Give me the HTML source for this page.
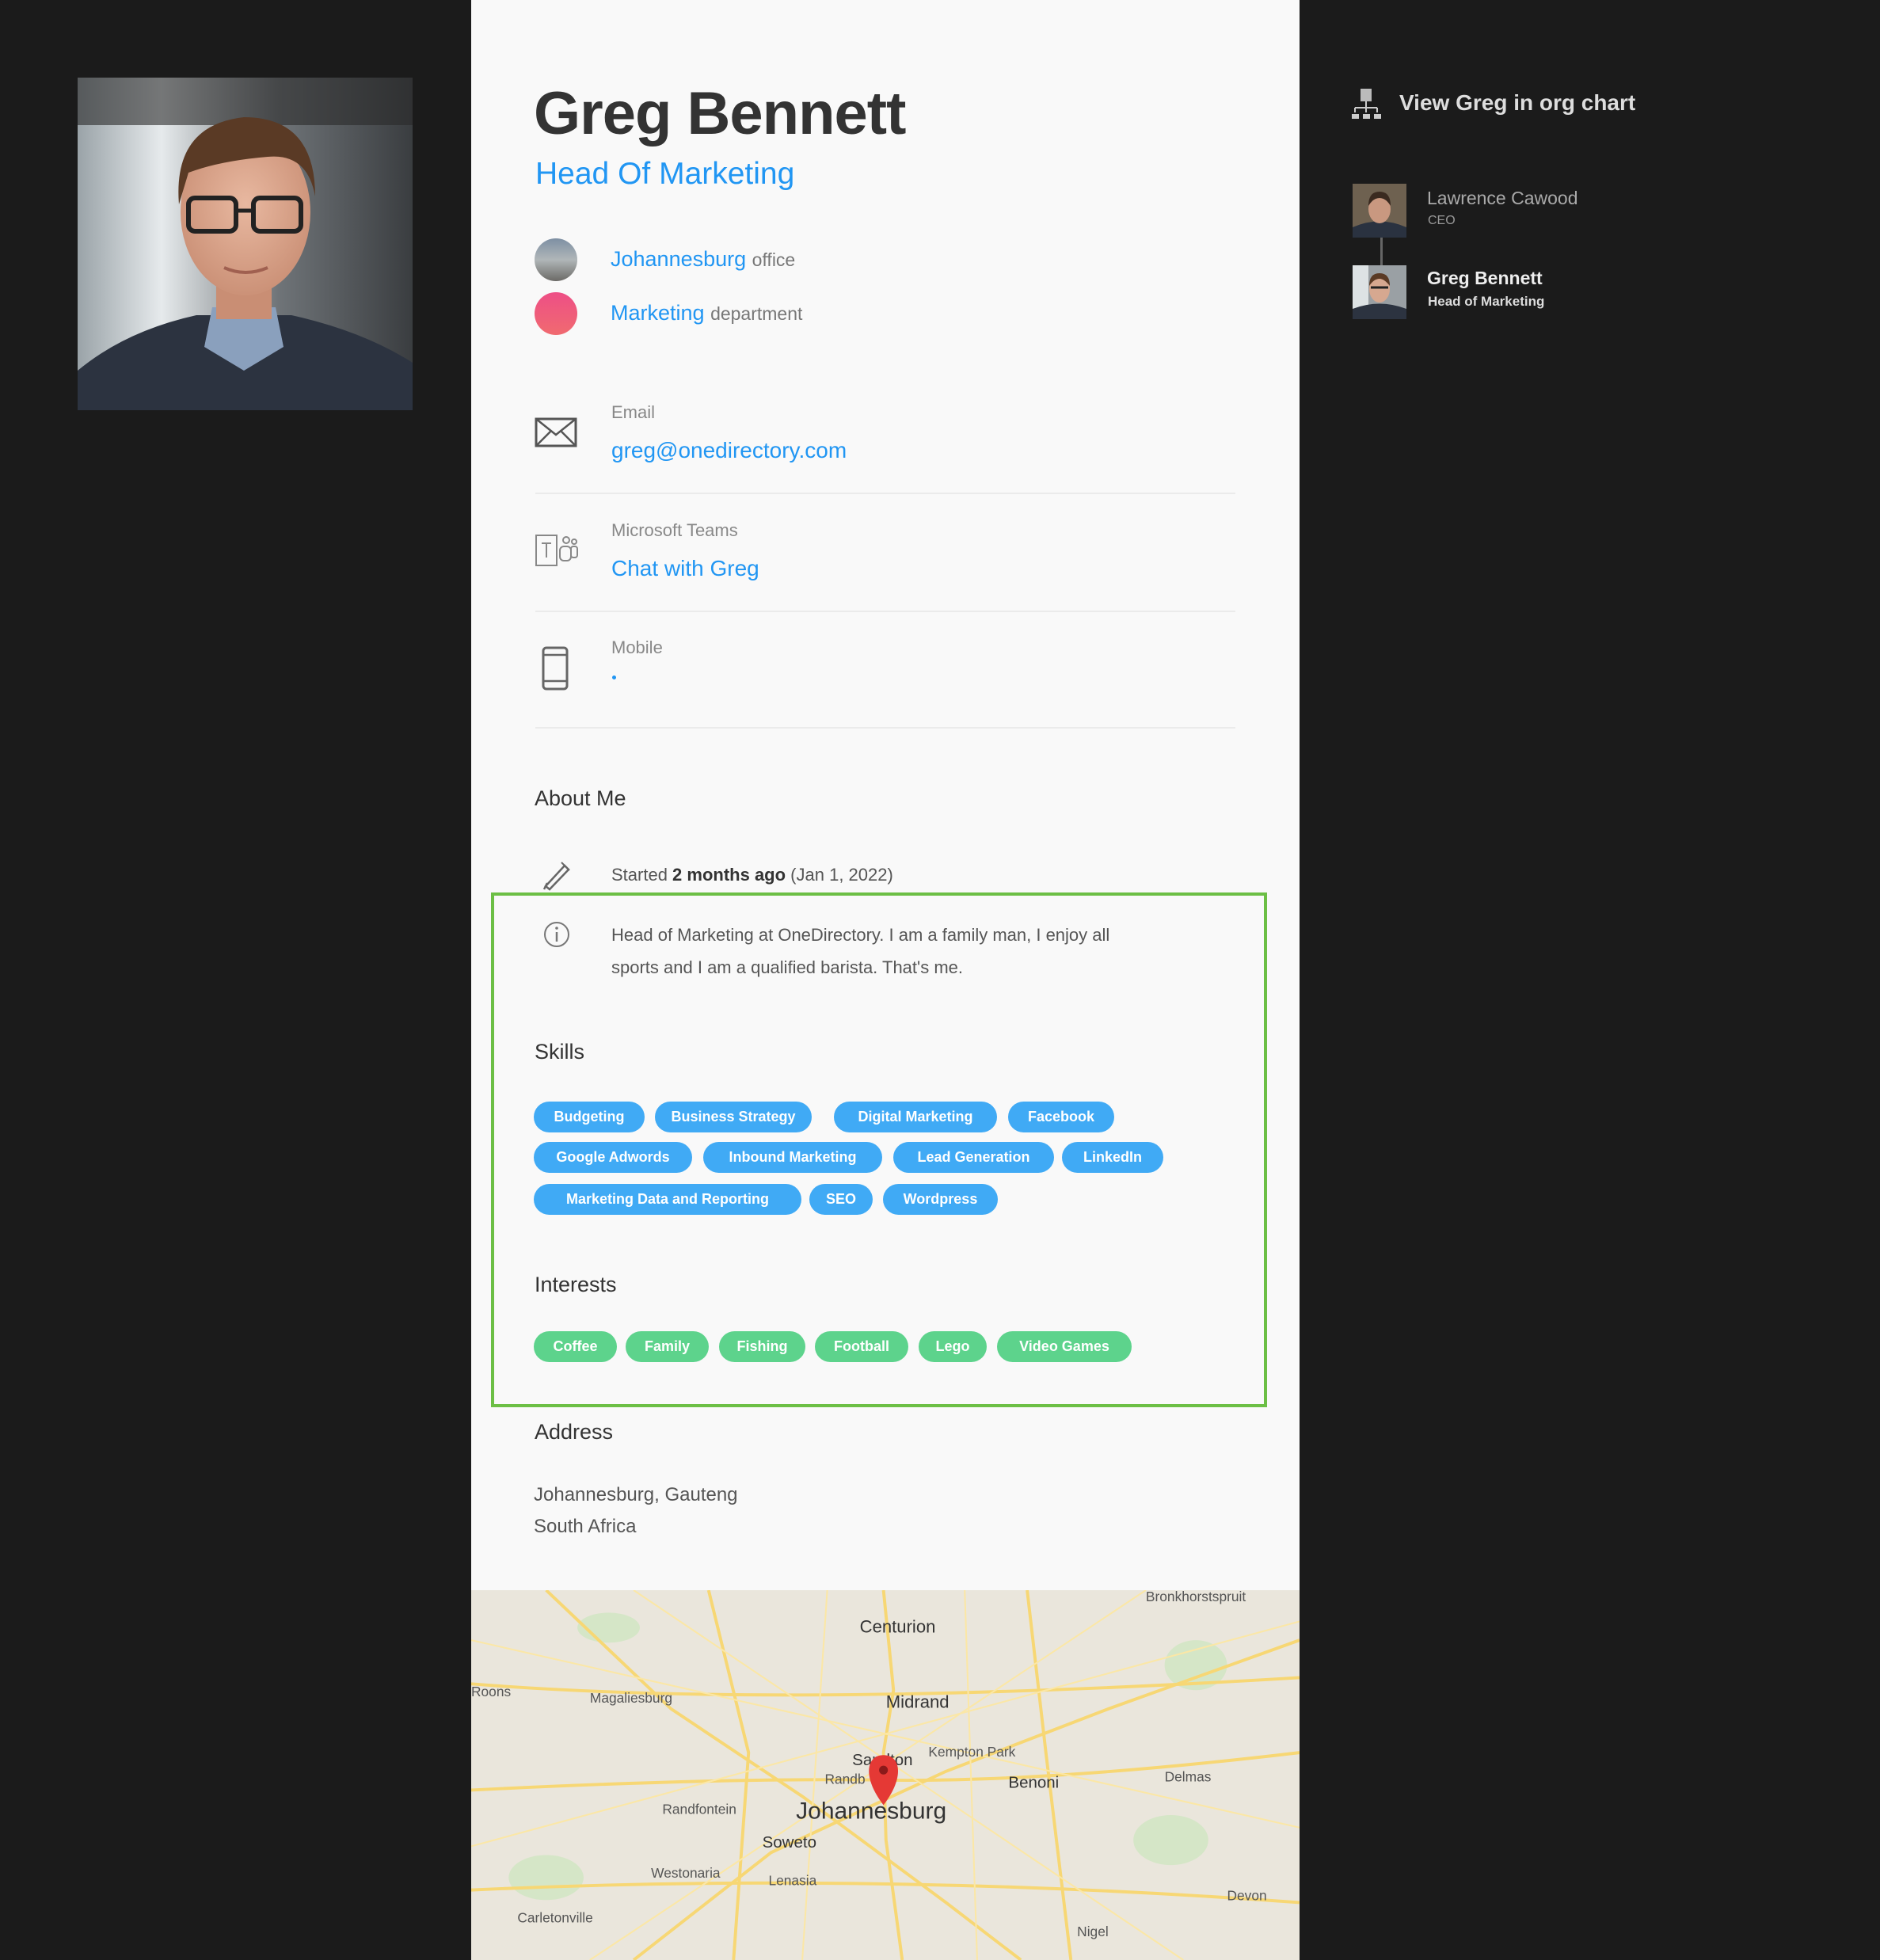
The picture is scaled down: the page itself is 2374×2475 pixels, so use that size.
<!DOCTYPE html>
<html><head><meta charset="utf-8">
<style>
*{margin:0;padding:0;box-sizing:border-box}
body{width:2374px;height:2475px;background:#1b1b1b;position:relative;overflow:hidden;font-family:"Liberation Sans",sans-serif}
.a{position:absolute;white-space:nowrap}
#panel{position:absolute;left:595px;top:0;width:1046px;height:2475px;background:#f9f9f9}
.blue{color:#2196f3}
.grey{color:#777}
.lbl{font-size:22px;color:#888}
.val{font-size:28px;color:#2196f3}
.hr{position:absolute;left:676px;width:884px;height:2px;background:#ebebeb}
.chip{position:absolute;height:39px;border-radius:20px;color:#fff;font-weight:bold;font-size:18px;line-height:39px;text-align:center}
.b{background:#40aaf5}
.g{background:#5dd38c}
.h{font-size:27px;color:#333}
.bio{font-size:22px;color:#555}
</style></head><body>
<div id="panel"></div>

<svg class="a" style="left:98px;top:98px" width="423" height="420" viewBox="0 0 423 420">
<defs><linearGradient id="bg" x1="0" x2="1"><stop offset="0" stop-color="#9aa3a8"/><stop offset=".25" stop-color="#e6eaec"/><stop offset=".6" stop-color="#6f7478"/><stop offset="1" stop-color="#3a3d40"/></linearGradient>
<radialGradient id="sk" cx=".5" cy=".45" r=".6"><stop offset="0" stop-color="#e8b8a0"/><stop offset="1" stop-color="#c98e74"/></radialGradient></defs>
<rect width="423" height="420" fill="url(#bg)"/>
<rect width="423" height="60" fill="#2a2a2a" opacity=".6"/>
<path d="M0 420 L0 370 Q60 320 150 300 L270 300 Q360 320 423 360 L423 420Z" fill="#2c3340"/>
<path d="M170 290 L250 290 L260 340 L210 370 L160 340Z" fill="#8aa0bd"/>
<rect x="175" y="230" width="70" height="75" fill="#c98e74"/>
<ellipse cx="212" cy="170" rx="82" ry="105" fill="url(#sk)"/>
<path d="M128 160 Q120 60 210 50 Q300 50 300 150 Q290 95 240 100 Q180 105 140 120Z" fill="#5a3a25"/>
<rect x="140" y="152" width="60" height="42" rx="8" fill="none" stroke="#222" stroke-width="6"/>
<rect x="222" y="152" width="60" height="42" rx="8" fill="none" stroke="#222" stroke-width="6"/>
<line x1="200" y1="168" x2="222" y2="168" stroke="#222" stroke-width="5"/>
<path d="M185 240 Q212 252 240 240" stroke="#a06050" stroke-width="4" fill="none"/>
</svg>

<div class="a" style="left:674px;top:100px;font-size:76px;font-weight:bold;color:#333;letter-spacing:-1px">Greg Bennett</div>
<div class="a blue" style="left:676px;top:198px;font-size:39px">Head Of Marketing</div>

<svg class="a" style="left:675px;top:301px" width="55" height="55"><defs><linearGradient id="c1" x1="0" y1="0" x2="0" y2="1"><stop offset="0" stop-color="#7d8fa3"/><stop offset=".5" stop-color="#b0b6b8"/><stop offset="1" stop-color="#6b6a66"/></linearGradient></defs><circle cx="27" cy="27" r="27" fill="url(#c1)"/></svg>
<svg class="a" style="left:675px;top:369px" width="55" height="55"><defs><linearGradient id="c2" x1="0" y1="0" x2="0" y2="1"><stop offset="0" stop-color="#ee4f86"/><stop offset="1" stop-color="#f06a70"/></linearGradient></defs><circle cx="27" cy="27" r="27" fill="url(#c2)"/></svg>
<div class="a" style="left:771px;top:312px;font-size:27px"><span class="blue">Johannesburg</span> <span class="grey" style="font-size:23px">office</span></div>
<div class="a" style="left:771px;top:380px;font-size:27px"><span class="blue">Marketing</span> <span class="grey" style="font-size:23px">department</span></div>

<svg class="a" style="left:675px;top:527px" width="54" height="40" viewBox="0 0 54 40"><rect x="2" y="2" width="50" height="34" fill="none" stroke="#555" stroke-width="3"/><path d="M2 2 L27 22 L52 2 M2 36 L20 18 M52 36 L34 18" fill="none" stroke="#555" stroke-width="2.5"/></svg>
<div class="a lbl" style="left:772px;top:508px">Email</div>
<div class="a val" style="left:772px;top:553px">greg@onedirectory.com</div>
<div class="hr" style="top:622px"></div>

<svg class="a" style="left:675px;top:672px" width="56" height="48" viewBox="0 0 56 48"><rect x="2" y="4" width="26" height="38" fill="none" stroke="#888" stroke-width="2"/><path d="M9 14 H21 M15 14 V32" stroke="#888" stroke-width="2"/><circle cx="40" cy="10" r="4" fill="none" stroke="#888" stroke-width="2"/><circle cx="50" cy="12" r="3" fill="none" stroke="#888" stroke-width="2"/><rect x="32" y="18" width="14" height="18" rx="5" fill="none" stroke="#888" stroke-width="2"/><rect x="46" y="18" width="8" height="14" rx="3" fill="none" stroke="#888" stroke-width="2"/></svg>
<div class="a lbl" style="left:772px;top:657px">Microsoft Teams</div>
<div class="a val" style="left:772px;top:702px">Chat with Greg</div>
<div class="hr" style="top:771px"></div>

<svg class="a" style="left:683px;top:815px" width="40" height="58" viewBox="0 0 40 58"><rect x="3" y="3" width="30" height="52" rx="4" fill="none" stroke="#666" stroke-width="3"/><path d="M3 12 H33 M3 45 H33" stroke="#666" stroke-width="2.5"/></svg>
<div class="a lbl" style="left:772px;top:805px">Mobile</div>
<div class="a" style="left:773px;top:853px;width:5px;height:5px;border-radius:50%;background:#2196f3"></div>
<div class="hr" style="top:918px"></div>

<div class="a h" style="left:675px;top:993px">About Me</div>

<svg class="a" style="left:683px;top:1085px" width="40" height="40" viewBox="0 0 40 40"><path d="M6 34 L30 8 L35 13 L11 38Z M4 38 L8 30" fill="none" stroke="#666" stroke-width="2.5"/><path d="M26 4 L36 14" stroke="#666" stroke-width="2"/></svg>
<div class="a bio" style="left:772px;top:1092px">Started <b style="color:#333">2 months ago</b> (Jan 1, 2022)</div>

<div class="a" style="left:620px;top:1127px;width:980px;height:650px;border:4px solid #6cbf45"></div>

<svg class="a" style="left:685px;top:1162px" width="36" height="36" viewBox="0 0 36 36"><circle cx="18" cy="18" r="15" fill="none" stroke="#777" stroke-width="2"/><path d="M18 15 V27" stroke="#777" stroke-width="2.5"/><circle cx="18" cy="10" r="1.8" fill="#777"/></svg>
<div class="a bio" style="left:772px;top:1160px;line-height:41px">Head of Marketing at OneDirectory. I am a family man, I enjoy all<br>sports and I am a qualified barista. That's me.</div>

<div class="a h" style="left:675px;top:1313px">Skills</div>
<div class="chip b" style="left:674px;top:1391px;width:140px">Budgeting</div>
<div class="chip b" style="left:827px;top:1391px;width:198px">Business Strategy</div>
<div class="chip b" style="left:1053px;top:1391px;width:206px">Digital Marketing</div>
<div class="chip b" style="left:1273px;top:1391px;width:134px">Facebook</div>
<div class="chip b" style="left:674px;top:1442px;width:200px">Google Adwords</div>
<div class="chip b" style="left:888px;top:1442px;width:226px">Inbound Marketing</div>
<div class="chip b" style="left:1128px;top:1442px;width:203px">Lead Generation</div>
<div class="chip b" style="left:1341px;top:1442px;width:128px">LinkedIn</div>
<div class="chip b" style="left:674px;top:1495px;width:338px">Marketing Data and Reporting</div>
<div class="chip b" style="left:1022px;top:1495px;width:80px">SEO</div>
<div class="chip b" style="left:1115px;top:1495px;width:145px">Wordpress</div>

<div class="a h" style="left:675px;top:1607px">Interests</div>
<div class="chip g" style="left:674px;top:1681px;width:105px">Coffee</div>
<div class="chip g" style="left:790px;top:1681px;width:105px">Family</div>
<div class="chip g" style="left:908px;top:1681px;width:109px">Fishing</div>
<div class="chip g" style="left:1029px;top:1681px;width:118px">Football</div>
<div class="chip g" style="left:1160px;top:1681px;width:86px">Lego</div>
<div class="chip g" style="left:1259px;top:1681px;width:170px">Video Games</div>

<div class="a h" style="left:675px;top:1793px">Address</div>
<div class="a bio" style="left:674px;top:1868px;line-height:40px;font-size:24px">Johannesburg, Gauteng<br>South Africa</div>

<svg class="a" style="left:595px;top:2008px" width="1046" height="467" viewBox="0 0 663 296" preserveAspectRatio="none">
<rect width="663" height="296" fill="#eae6dc"/>
<g fill="#cfe6c2" opacity=".8"><ellipse cx="60" cy="230" rx="30" ry="18"/><ellipse cx="580" cy="60" rx="25" ry="20"/><ellipse cx="110" cy="30" rx="25" ry="12"/><ellipse cx="560" cy="200" rx="30" ry="20"/></g>
<g fill="none" stroke="#f7d774" stroke-width="2.5">
<path d="M330 0 L338 80 L330 130 L332 200 L345 296"/>
<path d="M0 160 Q200 150 330 152 T663 130"/>
<path d="M60 0 L160 95 L265 165 L380 250 L440 296"/>
<path d="M663 40 L510 95 L380 145 L240 210 L130 296"/>
<path d="M190 0 L222 130 L210 296"/>
<path d="M445 0 L460 130 L480 296"/>
<path d="M0 75 Q250 95 663 70"/>
<path d="M0 240 Q320 225 663 250"/>
</g>
<g fill="none" stroke="#fbe7a6" stroke-width="1.3">
<path d="M0 40 L663 190"/><path d="M0 205 L663 25"/><path d="M130 0 L570 296"/><path d="M540 0 L95 296"/><path d="M285 0 L265 296"/><path d="M395 0 L405 296"/>
</g>
<g font-family="Liberation Sans" fill="#333">
<text x="311" y="34" font-size="14">Centurion</text>
<text x="332" y="94" font-size="14">Midrand</text>
<text x="260" y="183" font-size="19">Johannesburg</text>
<text x="233" y="206" font-size="13">Soweto</text>
<text x="305" y="140" font-size="13">Sandton</text>
<text x="430" y="158" font-size="13">Benoni</text>
</g>
<g font-family="Liberation Sans" fill="#555" font-size="11">
<text x="95" y="90">Magaliesburg</text>
<text x="366" y="133">Kempton Park</text>
<text x="283" y="155">Randb</text>
<text x="153" y="179">Randfontein</text>
<text x="144" y="230">Westonaria</text>
<text x="238" y="236">Lenasia</text>
<text x="37" y="266">Carletonville</text>
<text x="555" y="153">Delmas</text>
<text x="605" y="248">Devon</text>
<text x="485" y="277">Nigel</text>
<text x="540" y="9">Bronkhorstspruit</text>
<text x="0" y="85">Roons</text>
</g>
<path d="M330 132 C316 132 313 150 330 172 C347 150 344 132 330 132Z" fill="#e53935"/>
<circle cx="330" cy="144" r="3.5" fill="#8b1a1a"/>
</svg>

<svg class="a" style="left:1706px;top:110px" width="38" height="44" viewBox="0 0 38 44"><rect x="12" y="2" width="14" height="16" fill="#bbb"/><path d="M19 18 V26 M5 26 H33 M5 26 V32 M19 26 V32 M33 26 V32" stroke="#ccc" stroke-width="2"/><rect x="1" y="34" width="9" height="6" fill="#ccc"/><rect x="15" y="34" width="9" height="6" fill="#ccc"/><rect x="29" y="34" width="9" height="6" fill="#ccc"/></svg>
<div class="a" style="left:1767px;top:114px;font-size:28px;font-weight:bold;color:#ddd">View Greg in org chart</div>

<svg class="a" style="left:1708px;top:232px" width="68" height="68" viewBox="0 0 68 68"><rect width="68" height="68" fill="#6e6150"/><path d="M0 68 L0 55 Q34 40 68 55 L68 68Z" fill="#2a3240"/><ellipse cx="34" cy="32" rx="14" ry="18" fill="#c99880"/><path d="M20 28 Q20 10 34 10 Q48 10 48 28 Q42 18 34 18 Q26 18 20 28Z" fill="#3a2a20"/></svg>
<div class="a" style="left:1743px;top:300px;width:3px;height:35px;background:#666"></div>
<svg class="a" style="left:1708px;top:335px" width="68" height="68" viewBox="0 0 68 68"><rect width="68" height="68" fill="#9aa0a4"/><rect width="20" height="68" fill="#dde2e4"/><path d="M0 68 L0 55 Q34 42 68 55 L68 68Z" fill="#2c3340"/><ellipse cx="34" cy="30" rx="13" ry="17" fill="#d6a890"/><path d="M21 26 Q21 10 34 10 Q47 10 47 26 Q40 17 34 17 Q27 17 21 26Z" fill="#5a3a25"/><path d="M23 28 H45" stroke="#222" stroke-width="3"/></svg>
<div class="a" style="left:1802px;top:237px;font-size:23px;color:#aaa">Lawrence Cawood</div>
<div class="a" style="left:1803px;top:270px;font-size:16px;color:#999">CEO</div>
<div class="a" style="left:1802px;top:338px;font-size:23px;color:#eee;font-weight:bold">Greg Bennett</div>
<div class="a" style="left:1803px;top:371px;font-size:17px;color:#ddd;font-weight:bold">Head of Marketing</div>
</body></html>
